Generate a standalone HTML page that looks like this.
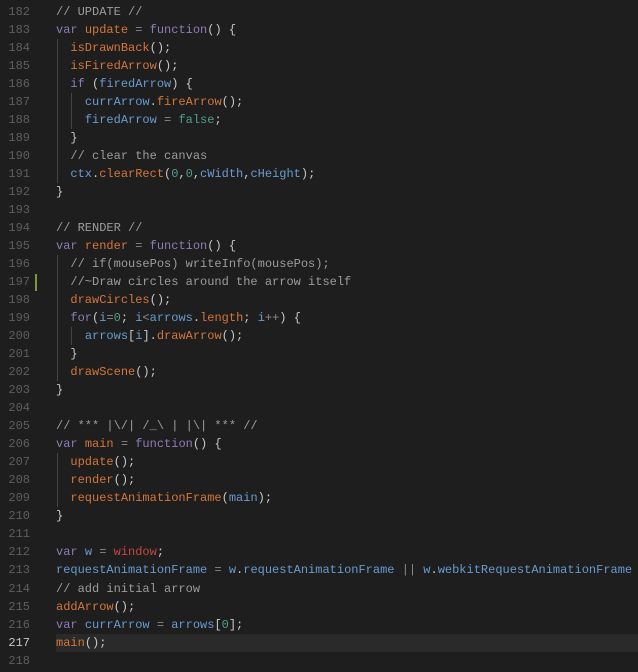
<!DOCTYPE html>
<html><head><meta charset="utf-8"><style>
body{margin:0;background:#1e1e1e;width:638px;height:672px;overflow:hidden;position:relative;font-family:"Liberation Mono",monospace;font-size:12px}
#code{position:absolute;left:0;top:3px;width:638px}
.l{height:18.03px;line-height:18px;white-space:pre;position:relative}
.n{position:absolute;left:0;width:30px;text-align:right;color:#5e5e5e}
.t{position:absolute;left:56px;color:#c8c8c8}
.k{color:#8e7cb8}.f{color:#d5763a}.v{color:#6a9bd0}.c{color:#9c9c9c}.b{color:#4e9e8c}.r{color:#c94545}.o{color:#8a8a8a}
.g{position:absolute;width:1px;background:#444}
.cur{position:absolute;left:56px;width:582px;height:18px;top:634px;background:#2a2a2a}
</style></head><body>
<div class="cur"></div>
<div class="g" style="left:57px;top:39px;height:144px"></div>
<div class="g" style="left:71px;top:93px;height:36px"></div>
<div class="g" style="left:57px;top:255px;height:126px"></div>
<div class="g" style="left:71px;top:327px;height:18px"></div>
<div class="g" style="left:57px;top:453px;height:54px"></div>
<div style="position:absolute;left:35px;top:274px;width:2px;height:17px;background:#7a9a3a"></div>
<div id="code">
<div class="l"><span class="n">182</span><span class="t"><span class="c">// UPDATE //</span></span></div>
<div class="l"><span class="n">183</span><span class="t"><span class="k">var</span> <span class="f">update</span> <span class="o">=</span> <span class="k">function</span>() {</span></div>
<div class="l"><span class="n">184</span><span class="t">  <span class="f">isDrawnBack</span>();</span></div>
<div class="l"><span class="n">185</span><span class="t">  <span class="f">isFiredArrow</span>();</span></div>
<div class="l"><span class="n">186</span><span class="t">  <span class="k">if</span> (<span class="v">firedArrow</span>) {</span></div>
<div class="l"><span class="n">187</span><span class="t">    <span class="v">currArrow</span>.<span class="f">fireArrow</span>();</span></div>
<div class="l"><span class="n">188</span><span class="t">    <span class="v">firedArrow</span> <span class="o">=</span> <span class="b">false</span>;</span></div>
<div class="l"><span class="n">189</span><span class="t">  }</span></div>
<div class="l"><span class="n">190</span><span class="t">  <span class="c">// clear the canvas</span></span></div>
<div class="l"><span class="n">191</span><span class="t">  <span class="v">ctx</span>.<span class="f">clearRect</span>(<span class="b">0</span>,<span class="b">0</span>,<span class="v">cWidth</span>,<span class="v">cHeight</span>);</span></div>
<div class="l"><span class="n">192</span><span class="t">}</span></div>
<div class="l"><span class="n">193</span><span class="t"></span></div>
<div class="l"><span class="n">194</span><span class="t"><span class="c">// RENDER //</span></span></div>
<div class="l"><span class="n">195</span><span class="t"><span class="k">var</span> <span class="f">render</span> <span class="o">=</span> <span class="k">function</span>() {</span></div>
<div class="l"><span class="n">196</span><span class="t">  <span class="c">// if(mousePos) writeInfo(mousePos);</span></span></div>
<div class="l"><span class="n">197</span><span class="t">  <span class="c">//~Draw circles around the arrow itself</span></span></div>
<div class="l"><span class="n">198</span><span class="t">  <span class="f">drawCircles</span>();</span></div>
<div class="l"><span class="n">199</span><span class="t">  <span class="k">for</span>(<span class="v">i</span><span class="o">=</span><span class="b">0</span>; <span class="v">i</span><span class="o">&lt;</span><span class="v">arrows</span>.<span class="f">length</span>; <span class="v">i</span><span class="o">++</span>) {</span></div>
<div class="l"><span class="n">200</span><span class="t">    <span class="v">arrows</span>[<span class="v">i</span>].<span class="f">drawArrow</span>();</span></div>
<div class="l"><span class="n">201</span><span class="t">  }</span></div>
<div class="l"><span class="n">202</span><span class="t">  <span class="f">drawScene</span>();</span></div>
<div class="l"><span class="n">203</span><span class="t">}</span></div>
<div class="l"><span class="n">204</span><span class="t"></span></div>
<div class="l"><span class="n">205</span><span class="t"><span class="c">// *** |\/| /_\ | |\| *** //</span></span></div>
<div class="l"><span class="n">206</span><span class="t"><span class="k">var</span> <span class="f">main</span> <span class="o">=</span> <span class="k">function</span>() {</span></div>
<div class="l"><span class="n">207</span><span class="t">  <span class="f">update</span>();</span></div>
<div class="l"><span class="n">208</span><span class="t">  <span class="f">render</span>();</span></div>
<div class="l"><span class="n">209</span><span class="t">  <span class="f">requestAnimationFrame</span>(<span class="v">main</span>);</span></div>
<div class="l"><span class="n">210</span><span class="t">}</span></div>
<div class="l"><span class="n">211</span><span class="t"></span></div>
<div class="l"><span class="n">212</span><span class="t"><span class="k">var</span> <span class="v">w</span> <span class="o">=</span> <span class="r">window</span>;</span></div>
<div class="l"><span class="n">213</span><span class="t"><span class="v">requestAnimationFrame</span> <span class="o">=</span> <span class="v">w</span>.<span class="v">requestAnimationFrame</span> <span class="o">||</span> <span class="v">w</span>.<span class="v">webkitRequestAnimationFrame</span></span></div>
<div class="l"><span class="n">214</span><span class="t"><span class="c">// add initial arrow</span></span></div>
<div class="l"><span class="n">215</span><span class="t"><span class="f">addArrow</span>();</span></div>
<div class="l"><span class="n">216</span><span class="t"><span class="k">var</span> <span class="v">currArrow</span> <span class="o">=</span> <span class="v">arrows</span>[<span class="b">0</span>];</span></div>
<div class="l"><span class="n" style="color:#c8c8c8">217</span><span class="t"><span class="f">main</span>();</span></div>
<div class="l"><span class="n">218</span><span class="t"></span></div>
</div>
</body></html>
